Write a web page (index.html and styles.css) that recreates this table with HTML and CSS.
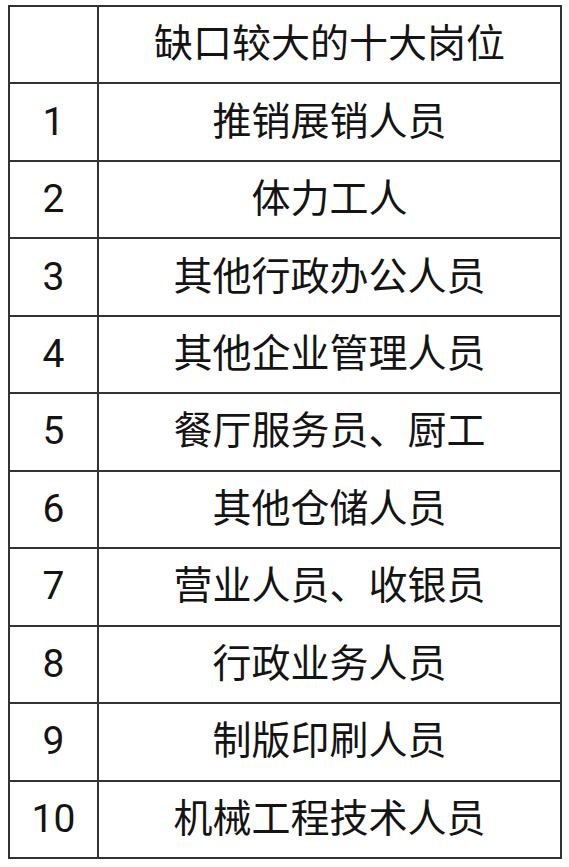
FILE: index.html
```html
<!DOCTYPE html>
<html lang="zh">
<head>
<meta charset="utf-8">
<link rel="stylesheet" href="styles.css">
</head>
<body>
<table class="jobs">
<tr><td class="num"></td><td class="name">缺口较大的十大岗位</td></tr>
<tr><td class="num">1</td><td class="name">推销展销人员</td></tr>
<tr><td class="num">2</td><td class="name">体力工人</td></tr>
<tr><td class="num">3</td><td class="name">其他行政办公人员</td></tr>
<tr><td class="num">4</td><td class="name">其他企业管理人员</td></tr>
<tr><td class="num">5</td><td class="name">餐厅服务员、厨工</td></tr>
<tr><td class="num">6</td><td class="name">其他仓储人员</td></tr>
<tr><td class="num">7</td><td class="name">营业人员、收银员</td></tr>
<tr><td class="num">8</td><td class="name">行政业务人员</td></tr>
<tr><td class="num">9</td><td class="name">制版印刷人员</td></tr>
<tr><td class="num">10</td><td class="name">机械工程技术人员</td></tr>
</table>
</body>
</html>
```
FILE: styles.css
```css
html, body {
  margin: 0;
  padding: 0;
  background: #ffffff;
}
body {
  padding: 5px 0 0 8px;
  font-family: Roboto, "Noto Sans CJK SC", sans-serif;
  color: #141414;
}
.jobs {
  border-collapse: collapse;
  width: 554px;
  height: 854px;
}
.jobs td {
  border: 2px solid #333333;
  text-align: center;
  vertical-align: middle;
  font-size: 39px;
  line-height: 1;
  padding: 0;
  height: 75px;
}
.jobs .num {
  width: 87px;
}
```
